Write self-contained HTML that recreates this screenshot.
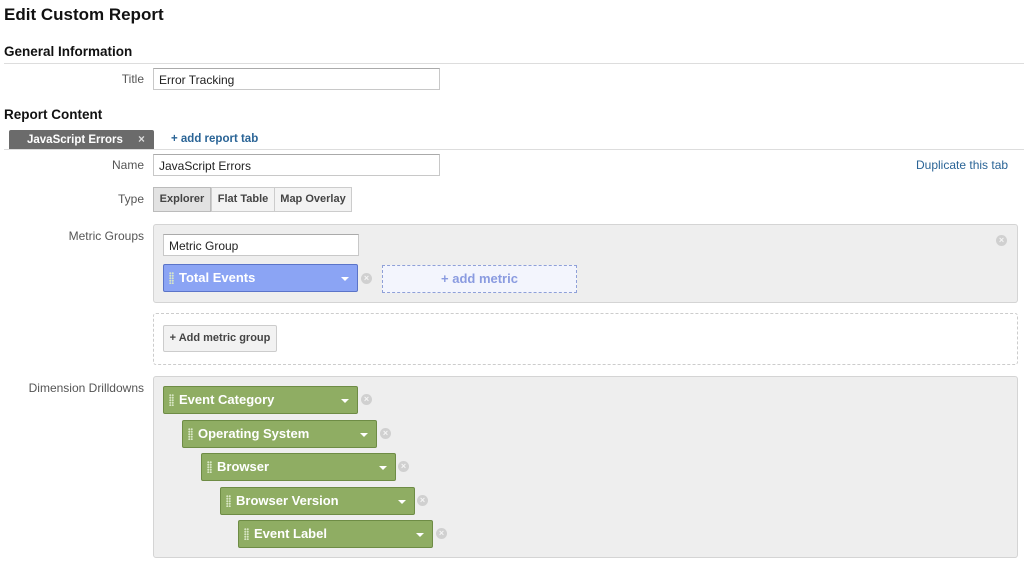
<!DOCTYPE html>
<html><head><meta charset="utf-8"><style>
*{box-sizing:border-box;margin:0;padding:0}
body{width:1024px;height:571px;background:#fff;font-family:"Liberation Sans",Arial,sans-serif;position:relative;overflow:hidden;color:#222}
.a{position:absolute}
h1{position:absolute;left:4px;top:5px;font-size:17px;font-weight:bold;color:#111}
h2{position:absolute;left:4px;font-size:13.5px;font-weight:bold;color:#111}
.line{position:absolute;left:4px;right:0;height:1px;background:#ddd}
.lbl{position:absolute;width:144px;text-align:right;font-size:12px;color:#555}
.inp{position:absolute;border:1px solid #c8c8c8;border-top-color:#aaa;background:#fff;font-size:12px;color:#222;padding:4px 5px;height:22px}
.btn{position:absolute;top:187px;height:25px;border:1px solid #ccc;background:#f3f3f3;font-size:11px;font-weight:bold;color:#444;text-align:center;line-height:23px}
.panel{position:absolute;left:153px;width:865px;background:#eee;border:1px solid #d4d4d4;border-radius:3px}
.chip{position:absolute;width:195px;height:28px;background:#8fad63;border:1px solid #6e8c45;border-radius:2px;color:#fff;font-size:13px;font-weight:bold;line-height:26px;padding-left:15px}
.chip:before{content:"";position:absolute;left:5px;top:7px;width:5px;height:12px;background:radial-gradient(circle,#d8e6c4 0.8px,transparent 1.2px) 0 0/2.5px 2.5px}
.chip:after{content:"";position:absolute;right:8px;top:12px;border-left:4px solid transparent;border-right:4px solid transparent;border-top:4px solid #fff}
.x{position:absolute;width:11px;height:11px;border-radius:50%;background:#d0d0d0;color:#f4f4f4;font-size:9px;line-height:11px;text-align:center;font-weight:bold}
</style></head><body>
<h1>Edit Custom Report</h1>
<h2 style="top:44px">General Information</h2>
<div class="line" style="top:63px"></div>
<div class="lbl" style="top:72px">Title</div>
<div class="inp" style="left:153px;top:68px;width:287px">Error Tracking</div>
<h2 style="top:107px">Report Content</h2>
<div class="a" style="left:9px;top:130px;width:145px;height:20px;background:#6b6b6b;border-radius:2px 2px 0 0;color:#fff;font-size:11.5px;font-weight:bold;line-height:20px;padding-left:18px">JavaScript Errors <span style="margin-left:12px;color:#ddd">×</span></div>
<div class="a" style="left:171px;top:133px;font-size:11.5px;font-weight:bold;color:#2a6496">+ add report tab</div>
<div class="line" style="top:149px"></div>
<div class="lbl" style="top:158px">Name</div>
<div class="inp" style="left:153px;top:154px;width:287px">JavaScript Errors</div>
<div class="a" style="left:916px;top:158px;font-size:12px;color:#2a6496">Duplicate this tab</div>
<div class="lbl" style="top:192px">Type</div>
<div class="btn" style="left:153px;width:58px;background:#e2e2e2;border-color:#bbb">Explorer</div>
<div class="btn" style="left:211px;width:64px">Flat Table</div>
<div class="btn" style="left:274px;width:78px">Map Overlay</div>
<div class="lbl" style="top:229px">Metric Groups</div>
<div class="panel" style="top:224px;height:79px"></div>
<div class="x" style="left:996px;top:235px">×</div>
<div class="inp" style="left:163px;top:234px;width:196px">Metric Group</div>
<div class="chip" style="left:163px;top:264px;background:#8ba4f4;border-color:#5b74c8">Total Events</div>
<div class="x" style="left:361px;top:273px">×</div>
<div class="a" style="left:382px;top:265px;width:195px;height:28px;border:1px dashed #8fa0d8;background:#f3f5fd;color:#8a9be0;font-size:13px;font-weight:bold;text-align:center;line-height:26px">+ add metric</div>
<div class="a" style="left:153px;top:313px;width:865px;height:52px;border:1px dashed #ccc;border-radius:3px"></div>
<div class="a" style="left:163px;top:325px;width:114px;height:27px;border:1px solid #ccc;background:#f2f2f2;border-radius:2px;font-size:11px;font-weight:bold;color:#444;text-align:center;line-height:25px">+ Add metric group</div>
<div class="lbl" style="top:381px">Dimension Drilldowns</div>
<div class="panel" style="top:376px;height:182px"></div>
<div class="chip" style="left:163px;top:386px">Event Category</div><div class="x" style="left:361px;top:394px">×</div>
<div class="chip" style="left:182px;top:420px">Operating System</div><div class="x" style="left:380px;top:428px">×</div>
<div class="chip" style="left:201px;top:453px">Browser</div><div class="x" style="left:398px;top:461px">×</div>
<div class="chip" style="left:220px;top:487px">Browser Version</div><div class="x" style="left:417px;top:495px">×</div>
<div class="chip" style="left:238px;top:520px">Event Label</div><div class="x" style="left:436px;top:528px">×</div>
</body></html>
